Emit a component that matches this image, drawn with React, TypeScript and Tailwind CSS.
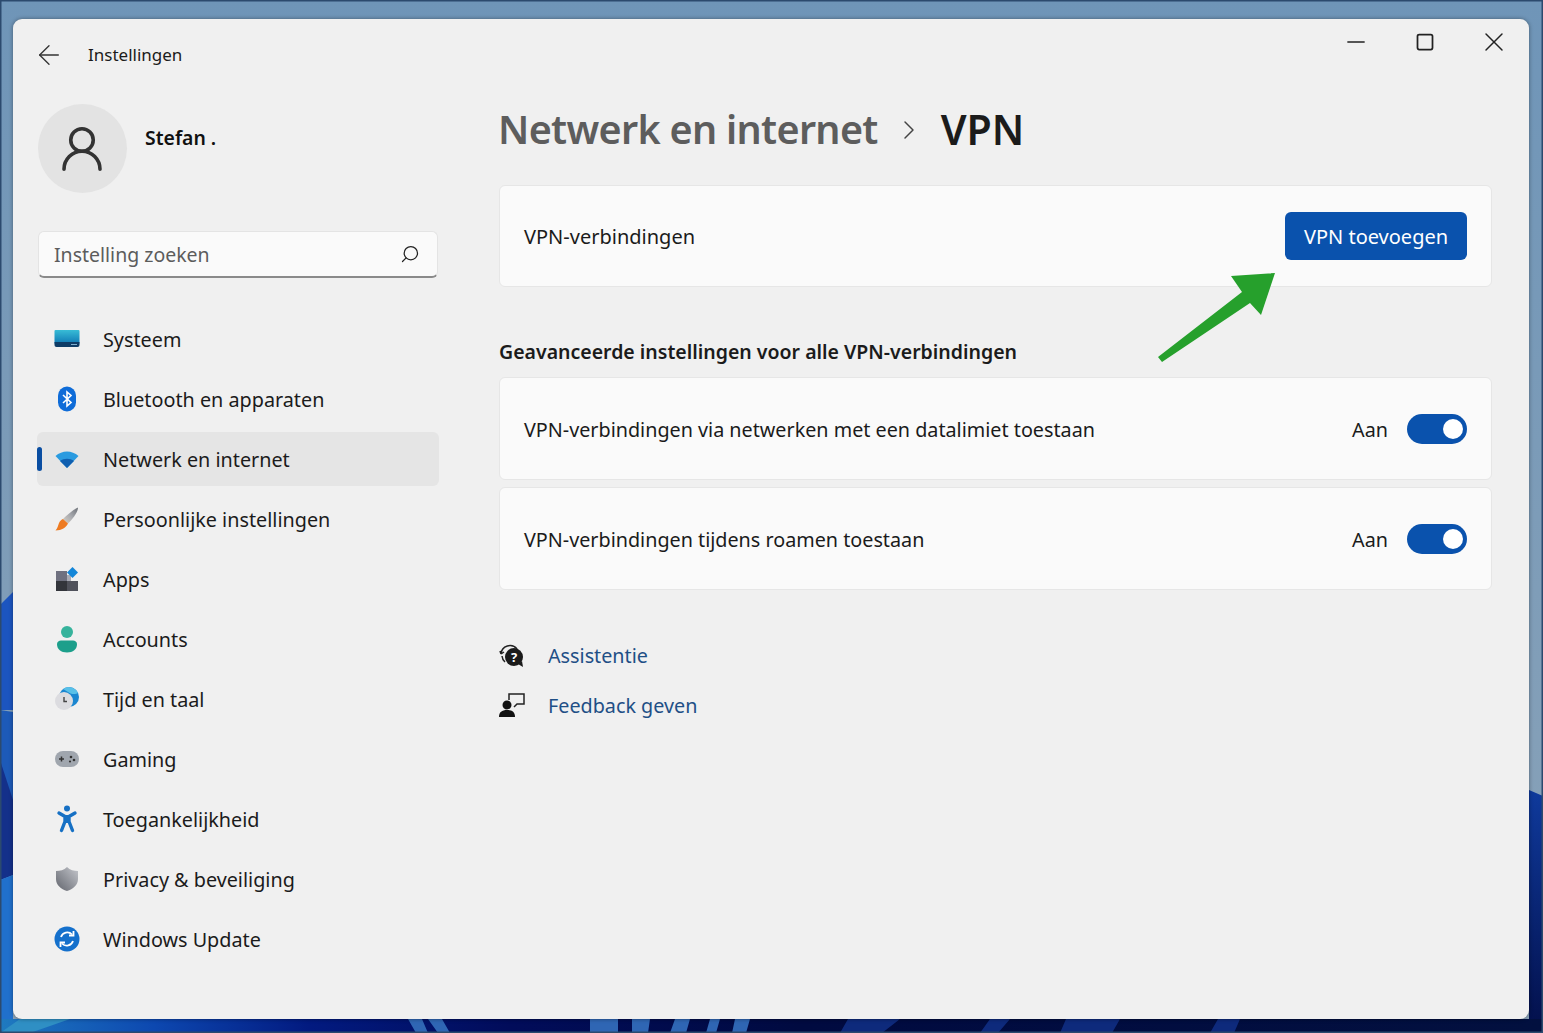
import React from "react";
import { ArrowLeft, ChevronRight, Minus, Search, Square, UserRound, X } from "lucide-react";

const font = "font-['Noto_Sans','Open_Sans',sans-serif]";

function SysIcon() {
  return (
    <svg width="26" height="20" viewBox="0 0 26 20">
      <defs>
        <linearGradient id="sys" x1="0" y1="0" x2="0" y2="1">
          <stop offset="0" stopColor="#38bcd6" />
          <stop offset="1" stopColor="#0f78b4" />
        </linearGradient>
      </defs>
      <rect x="0.5" y="1" width="25" height="14" rx="1" fill="url(#sys)" />
      <path d="M0.5 13h25v3a2 2 0 0 1-2 2h-21a2 2 0 0 1-2-2z" fill="#0e3c66" />
      <rect x="17" y="15" width="6" height="1" fill="#7fb0d0" />
    </svg>
  );
}

function BluetoothIcon() {
  return (
    <svg width="20" height="26" viewBox="0 0 20 26">
      <rect x="1" y="0.5" width="18" height="25" rx="9" fill="#0f6cd8" />
      <path d="M6 9l8 7.5-4 3.500V6l4 3.500-8 7.500" fill="none" stroke="#fff" strokeWidth="1.6" />
    </svg>
  );
}

function WifiIcon() {
  return (
    <svg width="24" height="20" viewBox="0 0 24 20">
      <path d="M0.5 7C7 1 17 1 23.5 7L12 19z" fill="#2a9be0" />
      <path d="M5 12C9 9 15 9 19 12L12 19z" fill="#0f5fb0" />
    </svg>
  );
}

function BrushIcon() {
  return (
    <svg width="24" height="24" viewBox="0 0 24 24">
      <defs>
        <linearGradient id="brush" x1="1" y1="0" x2="0" y2="1">
          <stop offset="0" stopColor="#6d7178" />
          <stop offset="0.5" stopColor="#a7a9ae" />
          <stop offset="1" stopColor="#d9d2c8" />
        </linearGradient>
      </defs>
      <path d="M23 0.5c0 5-6 12-10 16l-5-4.500C12 8 19 2 23 0.5z" fill="url(#brush)" />
      <path d="M8 12l5 4.500c-2 4-6 7-12.500 7C3 21 3 18 4 16c1-2 2.500-3.500 4-4z" fill="#ee7b22" />
    </svg>
  );
}

function AppsIcon() {
  return (
    <svg width="24" height="26" viewBox="0 0 24 26">
      <rect x="1" y="5" width="11" height="10" fill="#6f7180" />
      <rect x="1" y="15" width="11" height="10" fill="#33353b" />
      <rect x="12" y="15" width="11" height="10" fill="#50525b" />
      <rect x="12" y="9" width="4" height="6" fill="#a9abb4" />
      <path d="M17.500 1l5.500 5.500-5.500 5.500-5.500-5.500z" fill="#1386d8" />
    </svg>
  );
}

function AccountIcon() {
  return (
    <svg width="22" height="27" viewBox="0 0 22 27">
      <circle cx="11" cy="6" r="6" fill="#36b39c" />
      <path d="M1 18c0-2 2-3.500 4-3.500h12c2 0 4 1.500 4 3.500 0 5.500-4 8.500-10 8.500S1 23.500 1 18z" fill="#1c9f8b" />
    </svg>
  );
}

function TimeIcon() {
  return (
    <svg width="26" height="26" viewBox="0 0 26 26">
      <circle cx="15" cy="11" r="10" fill="#1a86d0" />
      <path d="M9 3a10 10 0 0 1 15 4c-3 2-8 1-10-1z" fill="#58c0e8" />
      <circle cx="10" cy="15" r="9" fill="#dcdce0" />
      <path d="M10 11v4.500h3" fill="none" stroke="#444" strokeWidth="1.4" />
    </svg>
  );
}

function GamingIcon() {
  return (
    <svg width="26" height="20" viewBox="0 0 26 20">
      <rect x="1" y="2" width="24" height="16" rx="8" fill="#a0a6ae" />
      <path d="M5 10h5M7.500 7.500v5" stroke="#333" strokeWidth="1.5" />
      <circle cx="17" cy="8" r="1.3" fill="#333" />
      <circle cx="20" cy="11" r="1.3" fill="#333" />
      <circle cx="16" cy="12.5" r="1.1" fill="#333" />
    </svg>
  );
}

function AccessIcon() {
  return (
    <svg width="22" height="28" viewBox="0 0 22 28">
      <circle cx="11" cy="3.5" r="3" fill="#1670c4" />
      <path d="M3 8l6 3.500v5l-3.500 9M19 8l-6 3.500v5l3.500 9" fill="none" stroke="#1670c4" strokeWidth="3.4" strokeLinecap="round" strokeLinejoin="round" />
      <rect x="9" y="10" width="4" height="8" fill="#1670c4" />
    </svg>
  );
}

function ShieldIcon() {
  return (
    <svg width="24" height="26" viewBox="0 0 24 26">
      <defs>
        <linearGradient id="shield" x1="1" y1="0" x2="0" y2="1">
          <stop offset="0" stopColor="#c4c6cc" />
          <stop offset="1" stopColor="#62656d" />
        </linearGradient>
      </defs>
      <path d="M12 1c3 3 7 4 11 4v8c0 6-5 10-11 12C6 23 1 19 1 13V5c4 0 8-1 11-4z" fill="url(#shield)" />
    </svg>
  );
}

function UpdateIcon() {
  return (
    <svg width="26" height="26" viewBox="0 0 26 26">
      <circle cx="13" cy="13" r="12.5" fill="#1470cc" />
      <path d="M7 11a6.500 6.500 0 0 1 11-2.500M19 15a6.500 6.500 0 0 1-11 2.500" fill="none" stroke="#fff" strokeWidth="1.8" />
      <path d="M19.500 5v4.500H15M6.500 21v-4.500H11" fill="none" stroke="#fff" strokeWidth="1.8" />
    </svg>
  );
}

const navItems = [
  { label: "Systeem", icon: <SysIcon /> },
  { label: "Bluetooth en apparaten", icon: <BluetoothIcon /> },
  { label: "Netwerk en internet", icon: <WifiIcon />, active: true },
  { label: "Persoonlijke instellingen", icon: <BrushIcon /> },
  { label: "Apps", icon: <AppsIcon /> },
  { label: "Accounts", icon: <AccountIcon /> },
  { label: "Tijd en taal", icon: <TimeIcon /> },
  { label: "Gaming", icon: <GamingIcon /> },
  { label: "Toegankelijkheid", icon: <AccessIcon /> },
  { label: "Privacy & beveiliging", icon: <ShieldIcon /> },
  { label: "Windows Update", icon: <UpdateIcon /> },
];

function NavItem({ label, icon, active }: { label: string; icon: React.ReactNode; active?: boolean }) {
  return (
    <div className={`relative flex h-[54px] items-center rounded-md ${active ? "bg-[#e5e5e5]" : ""}`}>
      {active && <div className="absolute left-0 top-[15px] h-[24px] w-[5px] rounded-full bg-[#0a4ea2]" />}
      <div className="flex w-[66px] justify-center pr-[6px]">{icon}</div>
      <span className="pt-[2px] text-[19.8px] text-[#1b1b1b]">{label}</span>
    </div>
  );
}

function Toggle() {
  return (
    <div className="flex h-[30px] w-[60px] items-center justify-end rounded-full bg-[#0a52ad] pr-[4px]">
      <div className="h-[20px] w-[20px] rounded-full bg-white" />
    </div>
  );
}

function ToggleCard({ label }: { label: string }) {
  return (
    <div className="flex h-[103px] items-center justify-between rounded-md border border-[#e6e6e6] bg-[#fafafa] px-[24px]">
      <span className="pt-[2px] text-[19.75px] text-[#1b1b1b]">{label}</span>
      <div className="flex items-center gap-[19px]">
        <span className="pt-[2px] text-[19.75px] text-[#1b1b1b]">Aan</span>
        <Toggle />
      </div>
    </div>
  );
}

export default function App() {
  return (
    <div className={`relative h-[1033px] w-[1543px] overflow-hidden pl-[13px] pt-[19px] ${font}`}>
      {/* wallpaper */}
      <svg className="absolute inset-0" width="1543" height="1033" viewBox="0 0 1543 1033">
        <defs>
          <linearGradient id="sky" x1="0" y1="0" x2="0" y2="1">
            <stop offset="0" stopColor="#6f95b8" />
            <stop offset="1" stopColor="#8ba3b8" />
          </linearGradient>
          <linearGradient id="deep" x1="0" y1="0" x2="0" y2="1">
            <stop offset="0" stopColor="#0f3a9c" />
            <stop offset="1" stopColor="#030f4a" />
          </linearGradient>
          <linearGradient id="floor" x1="0" y1="0" x2="1" y2="0">
            <stop offset="0" stopColor="#1f7ac0" />
            <stop offset="0.1" stopColor="#0d48b0" />
            <stop offset="0.2" stopColor="#021a80" />
            <stop offset="0.33" stopColor="#010c5a" />
            <stop offset="0.52" stopColor="#000a40" />
            <stop offset="1" stopColor="#02103f" />
          </linearGradient>
        </defs>
        <rect width="1543" height="1033" fill="url(#sky)" />
        <path d="M0 605L13 592V710H0z" fill="#1c55c0" />
        <path d="M0 710L13 712V875L0 880z" fill="#1d5ab8" />
        <path d="M0 760L13 800V875L0 880z" fill="#14308a" />
        <path d="M0 880L13 875V1019H0z" fill="#2070cc" />
        <path d="M1529 790L1543 796V1033H1529z" fill="url(#deep)" />
        <rect y="1019" width="1543" height="14" fill="url(#floor)" />
        <path d="M0 1033L20 1019H70L30 1033z" fill="#2f8fc4" />
        <path d="M408 1019h14l6 14h-12zM428 1019h14l8 14h-12zM590 1019h28v14h-28zM632 1019h18l-2 14h-16zM675 1019h15l-4 14h-16zM710 1019h10l-4 14h-10zM735 1019h15l-4 14h-14z" fill="#2f66b4" />
        <path d="M840 1033l8-14h52l-18 14zM980 1033l10-14h20l-12 14zM1060 1033l6-14h54l-8 14zM1210 1033l8-14h22l-6 14z" fill="#0e2a7c" />
        <rect x="0.5" y="0.5" width="1542" height="1032" fill="none" stroke="#2c4a6e" strokeWidth="2" />
      </svg>

      <div className="relative flex h-[1000px] w-[1516px] flex-col rounded-[9px] bg-[#f0f0f0] shadow-[0_0_4px_rgba(0,0,0,0.4)]">
        {/* window controls */}
        <div className="absolute right-px top-0 flex items-start">
          <div className="flex h-[46px] w-[69px] items-center justify-center"><Minus size={28} strokeWidth={1.2} className="text-[#222]" /></div>
          <div className="flex h-[46px] w-[69px] items-center justify-center"><Square size={20} strokeWidth={2.1} className="text-[#222]" /></div>
          <div className="flex h-[46px] w-[69px] items-center justify-center"><X size={32} strokeWidth={1.1} className="text-[#222]" /></div>
        </div>

        <div className="flex h-[72px] items-center pl-[20px]">
          <ArrowLeft size={32} strokeWidth={1} className="text-[#333]" />
          <span className="ml-[23px] text-[17px] text-[#1b1b1b]">Instellingen</span>
        </div>

        <div className="flex flex-1">
          {/* sidebar */}
          <div className="flex w-[426px] shrink-0 flex-col pl-[24px]">
            <div className="ml-px mt-[13px] flex h-[89px] items-start">
              <div className="flex h-[89px] w-[89px] items-center justify-center rounded-full bg-[#e3e3e3]">
                <UserRound size={54} strokeWidth={1.6} className="-translate-x-px text-[#333]" />
              </div>
              <span className="ml-[18px] mt-[19px] text-[19.4px] font-semibold text-[#111]">Stefan .</span>
            </div>
            <div className="ml-px mt-[38px] flex h-[47px] w-[400px] items-center justify-between rounded-md border border-[#e4e4e4] border-b-2 border-b-[#8a8a8a] bg-[#fafafa] pl-[15px] pr-[17px]">
              <span className="pt-[2px] text-[19.5px] text-[#5c5c5c]">Instelling zoeken</span>
              <Search size={20} strokeWidth={1.5} className="-scale-x-100 text-[#222]" />
            </div>
            <div className="mt-[34px] flex w-[402px] flex-col gap-[6px]">
              {navItems.map((item) => (
                <NavItem key={item.label} {...item} />
              ))}
            </div>
          </div>

          {/* content */}
          <div className="flex flex-1 flex-col pl-[60px] pr-[37px]">
            <div className="-ml-px flex h-[94px] items-center pb-[16px] font-semibold">
              <span className="text-[39.5px] tracking-[-0.68px] text-[#5d5d5d]">Netwerk en internet</span>
              <ChevronRight size={32} strokeWidth={1.1} className="ml-[15px] mr-[16px] text-[#444]" />
              <span className="text-[41px] text-[#1b1b1b]">VPN</span>
            </div>
            <div className="flex h-[102px] items-center justify-between rounded-md border border-[#e6e6e6] bg-[#fafafa] px-[24px]">
              <span className="pt-[2px] text-[20px] text-[#1b1b1b]">VPN-verbindingen</span>
              <div className="relative">
                <div className="flex h-[48px] w-[182px] items-center justify-center rounded-md bg-[#0a52ad] pt-[2px] text-[20px] text-white">VPN toevoegen</div>
                {/* annotation arrow */}
                <svg className="absolute left-[-130px] top-[58px]" width="125" height="95" viewBox="0 0 125 95">
                  <path d="M120 3L76 6L87 22L3 87L7 92L95 33L106 45z" fill="#26a02c" />
                </svg>
              </div>
            </div>
            <div className="mb-[12px] mt-[50px] pt-px text-[19.5px] font-semibold leading-[27px] text-[#1b1b1b]">Geavanceerde instellingen voor alle VPN-verbindingen</div>
            <div className="flex flex-col gap-[7px]">
              <ToggleCard label="VPN-verbindingen via netwerken met een datalimiet toestaan" />
              <ToggleCard label="VPN-verbindingen tijdens roamen toestaan" />
            </div>
            <div className="mt-[50px] flex flex-col gap-[20px]">
              <div className="flex h-[30px] items-center">
                <svg width="26" height="26" viewBox="0 0 26 26" className="mr-[23px]">
                  <path d="M2 12a9 9 0 0 1 16-5M2 12l-1-3M2 12l3-2M6 20a9 9 0 0 1-3-6" fill="none" stroke="#222" strokeWidth="1.5" />
                  <circle cx="15" cy="15" r="9" fill="#1a1a1a" />
                  <path d="M19 22l5 3-1-6z" fill="#1a1a1a" />
                  <text x="15" y="20" textAnchor="middle" fontSize="13" fontWeight="700" fill="#fff">?</text>
                </svg>
                <span className="pt-[2px] text-[19.75px] text-[#1f4f86]">Assistentie</span>
              </div>
              <div className="flex h-[30px] items-center">
                <svg width="26" height="26" viewBox="0 0 26 26" className="mr-[23px]">
                  <circle cx="8" cy="13" r="4.5" fill="#111" />
                  <path d="M0 25c0-5 3-7 8-7s8 2 8 7z" fill="#111" />
                  <path d="M10 8V2h15v10h-7l-3 3" fill="none" stroke="#222" strokeWidth="1.5" />
                </svg>
                <span className="pt-[2px] text-[19.75px] text-[#1f4f86]">Feedback geven</span>
              </div>
            </div>
          </div>
        </div>
      </div>
    </div>
  );
}
